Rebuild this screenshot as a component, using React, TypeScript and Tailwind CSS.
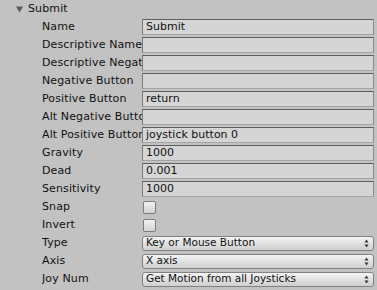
import React from "react";

const font = { fontFamily: '"DejaVu Sans", Verdana, sans-serif' };

function TextRow({ label, value }: { label: string; value?: string }) {
  return (
    <div className="flex h-[18px] items-center">
      <div className="w-[100px] shrink-0 overflow-hidden whitespace-nowrap text-[11px] tracking-[0.12px] text-[#111]">{label}</div>
      <div className="flex h-[16px] flex-1 items-center overflow-hidden whitespace-nowrap border border-t-[#5f5f5f] border-l-[#7a7a7a] border-r-[#8c8c8c] border-b-[#a5a5a5] bg-[#d5d5d5] pl-[3px] text-[11px] text-[#111]">
        {value}
      </div>
    </div>
  );
}

function CheckRow({ label }: { label: string }) {
  return (
    <div className="flex h-[18px] items-center">
      <div className="w-[100px] shrink-0 overflow-hidden whitespace-nowrap text-[11px] tracking-[0.12px] text-[#111]">{label}</div>
      <div className="ml-[1px] h-[13px] w-[13px] rounded-[2px] border border-[#7c7c7c] bg-gradient-to-b from-[#f2f2f2] to-[#d2d2d2]" />
    </div>
  );
}

function DropRow({ label, value }: { label: string; value: string }) {
  return (
    <div className="flex h-[18px] items-center">
      <div className="w-[100px] shrink-0 overflow-hidden whitespace-nowrap text-[11px] tracking-[0.12px] text-[#111]">{label}</div>
      <div className="flex h-[15px] flex-1 items-center justify-between rounded-[3px] border border-[#828282] bg-gradient-to-b from-[#f4f4f4] to-[#cfcfcf] pl-[3px] pr-[4px] text-[10.5px] text-[#111]">
        <span className="whitespace-nowrap">{value}</span>
        <svg width="5" height="9" viewBox="0 0 5 9">
          <path d="M2.5 0.5 L4.5 3.5 L0.5 3.5 Z" fill="#333" />
          <path d="M2.5 8.5 L4.5 5.5 L0.5 5.5 Z" fill="#333" />
        </svg>
      </div>
    </div>
  );
}

export default function App() {
  return (
    <div className="h-[290px] w-[377px] overflow-hidden bg-[#c2c2c2]" style={font}>
      <div className="flex h-[18px] items-center pl-[16px] text-[11px] tracking-[0.12px] text-[#111]">
        <svg width="7" height="7" viewBox="0 0 7 7" className="mr-[5px]">
          <path d="M0 0.5 L7 0.5 L3.5 6.5 Z" fill="#5a5a5a" />
        </svg>
        <span>Submit</span>
      </div>
      <div className="flex flex-col pl-[42px] pr-[3px]">
        <TextRow label="Name" value="Submit" />
        <TextRow label="Descriptive Name" />
        <TextRow label="Descriptive Negative Name" />
        <TextRow label="Negative Button" />
        <TextRow label="Positive Button" value="return" />
        <TextRow label="Alt Negative Button" />
        <TextRow label="Alt Positive Button" value="joystick button 0" />
        <TextRow label="Gravity" value="1000" />
        <TextRow label="Dead" value="0.001" />
        <TextRow label="Sensitivity" value="1000" />
        <CheckRow label="Snap" />
        <CheckRow label="Invert" />
        <DropRow label="Type" value="Key or Mouse Button" />
        <DropRow label="Axis" value="X axis" />
        <DropRow label="Joy Num" value="Get Motion from all Joysticks" />
      </div>
    </div>
  );
}
